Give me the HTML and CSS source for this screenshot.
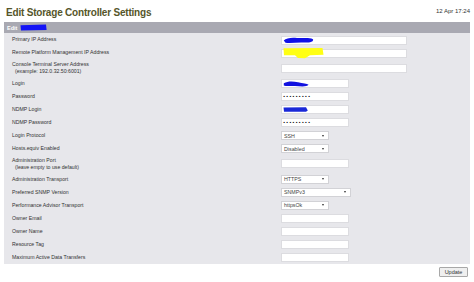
FILE: index.html
```html
<!DOCTYPE html>
<html lang="en">
<head>
    <meta charset="UTF-8">
    <meta name="viewport" content="width=device-width, initial-scale=1.0">
    <title>Edit Storage Controller Settings</title>
    <link rel="stylesheet" href="styles.css">
</head>
<body>
    <div class="top">
        <h1 class="title">Edit Storage Controller Settings</h1>
        <span class="date">12 Apr 17:24</span>
    </div>

    <div class="bar">
        <span>Edit</span>
        <svg class="scribble" width="27" height="7" viewBox="0 0 27 7"><path d="M0.5 1.2 L26 0.5 L26.6 6 L1 6.6 Z" fill="#1414f5"/></svg>
    </div>

    <div class="panel">
        <div class="row">
            <div class="label">Primary IP Address</div>
            <div class="input long">
                <svg class="scribble" width="31" height="7" viewBox="0 0 31 7"><path d="M0.8 3.4 C3 0.8 9 0.3 14 0.9 C20 1.5 26 0.2 30 2.2 C31 5 26 5.8 20 5.5 C14 5.2 8 6.6 2.5 5.8 Z" fill="#1010e8"/></svg>
            </div>
        </div>
        <div class="row">
            <div class="label">Remote Platform Management IP Address</div>
            <div class="input long">
                <svg class="scribble" width="41" height="10" viewBox="0 0 41 10"><path d="M0.5 0.3 L39.5 0.1 L40.5 6.8 L27 7.3 L22 10.2 L15 9.9 L12 7.3 L1 7.3 Z" fill="#ffff14"/></svg>
            </div>
        </div>
        <div class="row">
            <div class="label">Console Terminal Server Address<span class="hint">(example: 192.0.32.50:6001)</span></div>
            <div class="input long"></div>
        </div>
        <div class="row">
            <div class="label">Login</div>
            <div class="input short">
                <svg class="scribble" width="26" height="6" viewBox="0 0 26 6"><path d="M0.8 2.2 C5 0 10 0.3 15 1.3 C20 2.3 24 2.5 25.6 3.8 C24 6 18 5.5 12 5 C7 4.8 3 5.4 0.8 4.4 Z" fill="#1212e0"/></svg>
            </div>
        </div>
        <div class="row">
            <div class="label">Password</div>
            <div class="input short"><span class="dots">.........</span></div>
        </div>
        <div class="row">
            <div class="label">NDMP Login</div>
            <div class="input short">
                <svg class="scribble" width="25" height="5" viewBox="0 0 25 5"><path d="M0.5 0.6 L23 0.2 L24.8 3.4 L23 4.8 L1 4.7 Z" fill="#1a28d8"/></svg>
            </div>
        </div>
        <div class="row">
            <div class="label">NDMP Password</div>
            <div class="input short"><span class="dots">.........</span></div>
        </div>
        <div class="row">
            <div class="label">Login Protocol</div>
            <div class="select">SSH<span class="arrow"></span></div>
        </div>
        <div class="row">
            <div class="label">Hosts.equiv Enabled</div>
            <div class="select">Disabled<span class="arrow"></span></div>
        </div>
        <div class="row">
            <div class="label">Administration Port<span class="hint">(leave empty to use default)</span></div>
            <div class="input short"></div>
        </div>
        <div class="row">
            <div class="label">Administration Transport</div>
            <div class="select">HTTPS<span class="arrow"></span></div>
        </div>
        <div class="row">
            <div class="label">Preferred SNMP Version</div>
            <div class="select wide">SNMPv3<span class="arrow"></span></div>
        </div>
        <div class="row">
            <div class="label">Performance Advisor Transport</div>
            <div class="select">httpsOk<span class="arrow"></span></div>
        </div>
        <div class="row">
            <div class="label">Owner Email</div>
            <div class="input short"></div>
        </div>
        <div class="row">
            <div class="label">Owner Name</div>
            <div class="input short"></div>
        </div>
        <div class="row">
            <div class="label">Resource Tag</div>
            <div class="input short"></div>
        </div>
        <div class="row">
            <div class="label">Maximum Active Data Transfers</div>
            <div class="input short"></div>
        </div>
    </div>

    <div class="actions">
        <button type="submit" class="btn">Update</button>
    </div>
</body>
</html>
```

FILE: styles.css
```css
body {
    margin: 0;
    font-family: "Liberation Sans", Arial, sans-serif;
    background-color: #fff;
    color: #333;
}
.top {
    display: flex;
    justify-content: space-between;
    align-items: center;
    height: 22px;
    padding: 0 4px 0 6px;
}
.title {
    margin: 0;
    padding-top: 2px;
    font-size: 10px;
    font-weight: bold;
    letter-spacing: -0.2px;
    color: #55552a;
}
.date {
    font-size: 6px;
    color: #333;
}
.bar {
    margin: 0 4px;
    height: 11px;
    background-color: #a9a9b2;
    display: flex;
    align-items: center;
    gap: 3px;
    padding-left: 3px;
    font-size: 5.5px;
    font-weight: bold;
    color: #fff;
}
.scribble {
    display: block;
    overflow: visible;
}
.panel {
    margin: 0 4px;
    padding-top: 0.5px;
    background-color: #e7e7eb;
}
.row {
    display: grid;
    grid-template-columns: 277px 1fr;
    align-items: center;
    min-height: 13px;
    padding: 1.5px 0;
    box-sizing: border-box;
}
.label {
    padding-left: 8px;
    font-size: 5.2px;
    line-height: 7.3px;
}
.hint {
    display: block;
    padding-left: 3px;
}
.input {
    height: 9px;
    box-sizing: border-box;
    background-color: #fff;
    border: 1px solid #dcdce0;
    display: flex;
    align-items: center;
    padding-left: 1px;
}
.long {
    width: 126px;
}
.short {
    width: 68px;
}
.dots {
    font-size: 8px;
    font-weight: bold;
    letter-spacing: 0.9px;
    line-height: 1;
    margin-top: -4px;
    color: #111;
}
.select {
    width: 48px;
    height: 9px;
    box-sizing: border-box;
    background-color: #fff;
    border: 1px solid #d2d2d6;
    display: flex;
    justify-content: space-between;
    align-items: center;
    padding: 0 4px 0 2px;
    font-size: 5.3px;
    color: #444;
}
.select.wide {
    width: 70px;
}
.arrow {
    width: 0;
    height: 0;
    border-left: 1.6px solid transparent;
    border-right: 1.6px solid transparent;
    border-top: 2px solid #333;
}
.actions {
    display: flex;
    justify-content: flex-end;
    padding: 3.5px 6px 0 0;
}
.btn {
    width: 29px;
    height: 9.5px;
    padding: 0;
    font-family: "Liberation Sans", Arial, sans-serif;
    font-size: 5.5px;
    color: #333;
    background-color: #efefef;
    border: 1px solid #a8a8a8;
    border-radius: 1px;
}
```
